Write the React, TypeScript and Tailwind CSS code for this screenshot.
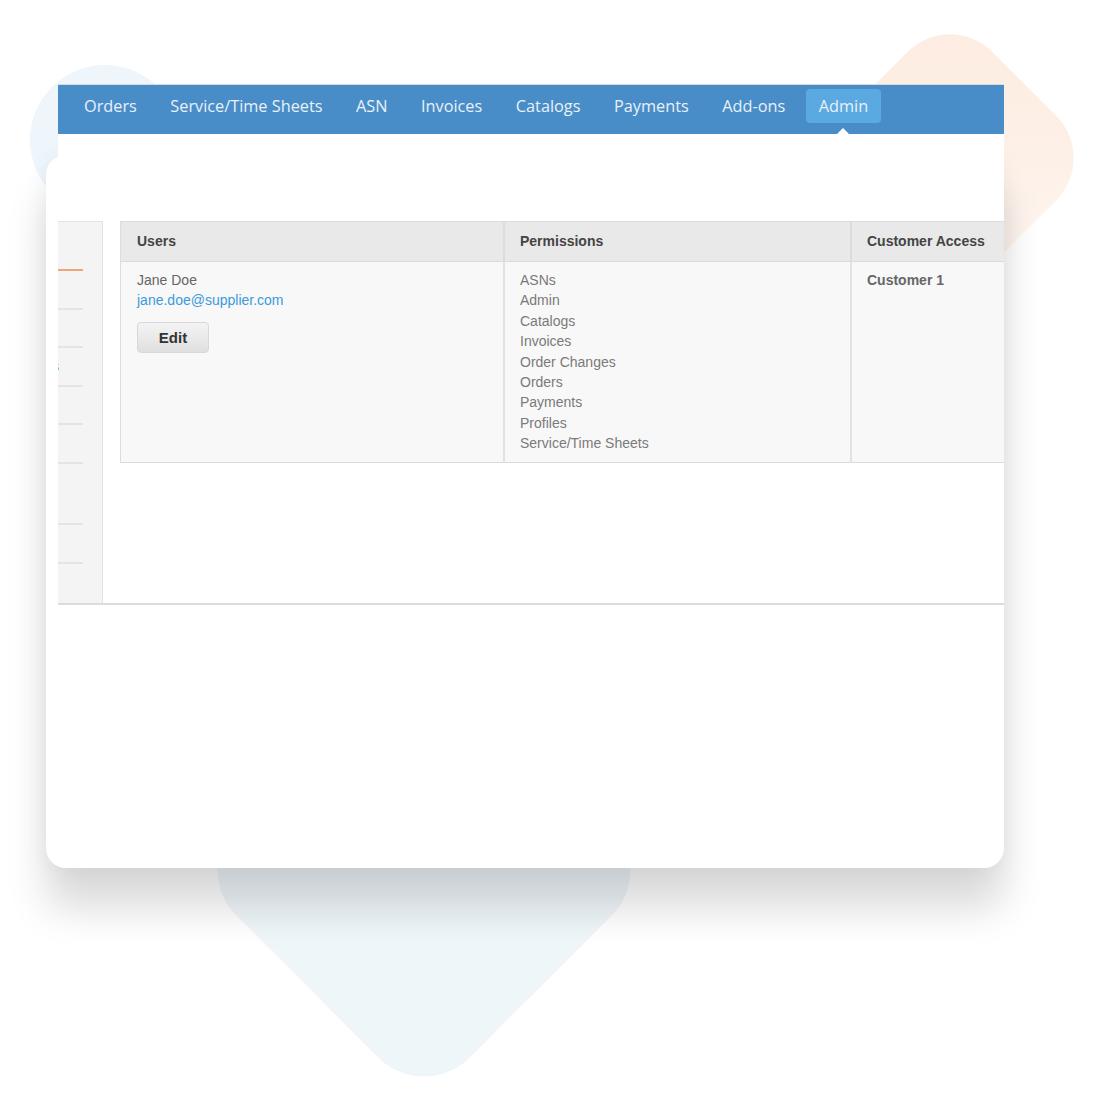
const navItems = [
  "Orders",
  "Service/Time Sheets",
  "ASN",
  "Invoices",
  "Catalogs",
  "Payments",
  "Add-ons",
  "Admin",
];

const permissions = [
  "ASNs",
  "Admin",
  "Catalogs",
  "Invoices",
  "Order Changes",
  "Orders",
  "Payments",
  "Profiles",
  "Service/Time Sheets",
];

// heights of the cut-off side menu rows, line included
const sideRows = [49, 39, 38, 39, 38, 39, 61, 39];

export default function App() {
  return (
    <div className="relative w-[1111px] h-[1114px] overflow-hidden bg-white">
      {/* background shapes */}
      <div className="absolute left-[30px] top-[65px] w-[150px] h-[150px] rounded-full bg-[#eef6fb]" />
      <div className="absolute left-[845px] top-[53px] w-[210px] h-[210px] rotate-45 rounded-[60px] bg-linear-to-br from-[#fdece0] via-[#fdf0e7] to-[#fffaf6]" />
      <div className="absolute left-[259px] top-[705px] w-[330px] h-[330px] rotate-45 rounded-[65px] bg-[#eff6fa]" />

      <div className="relative z-10 pt-[155px] pl-[46px]">
        {/* CARD */}
        <div className="flow-root w-[958px] h-[713px] rounded-[20px] bg-white shadow-[0_40px_40px_rgba(0,0,0,0.15),0_0_24px_rgba(0,0,0,0.05)]">
          {/* SCREENSHOT */}
          <div className="-mt-[71px] ml-[12px] w-[946px] overflow-hidden bg-white font-['Liberation_Sans',Arial,sans-serif]">
            {/* NAV */}
            <div className="border-t border-[#dadada]">
              <nav className="flex h-[49px] items-start gap-[7.5px] bg-[#488dc8] pl-[13px] pt-[4px] font-['Open_Sans',sans-serif] text-[16.3px] text-[#e9f1f9]">
                {navItems.map((item) => (
                  <div
                    key={item}
                    className={
                      item === "Admin"
                        ? "relative flex h-[34px] items-center rounded-[4px] bg-[#5aa9e0] px-[13px] pt-[1px]"
                        : "relative flex h-[34px] items-center px-[13px] pt-[1px]"
                    }
                  >
                    {item}
                    {item === "Admin" && (
                      <span className="absolute left-1/2 top-[39px] -ml-[6px] h-0 w-0 border-x-[6px] border-b-[6px] border-x-transparent border-b-white" />
                    )}
                  </div>
                ))}
              </nav>
            </div>

            {/* page title cut off at left */}
            <div className="h-[87px] overflow-hidden pt-[48px] text-[14px] text-[#3b9ad9]">
              <span className="-ml-[7px]">s</span>
            </div>

            {/* MAIN */}
            <div className="flex h-[382px]">
              {/* side menu */}
              <div className="w-[45px] shrink-0 border-t border-r border-[#e3e3e3] bg-[#f4f4f4]">
                {sideRows.map((h, i) => (
                  <div
                    key={i}
                    style={{ height: h }}
                    className={
                      i === 0
                        ? "w-[25px] border-b-2 border-[#eea47c]"
                        : "w-[25px] overflow-hidden border-b-2 border-[#e4e4e4] text-[14px] leading-[36px] text-[#3b9ad9]"
                    }
                  >
                    {i === 3 && <span className="-ml-[6px]">s</span>}
                  </div>
                ))}
              </div>

              {/* users table */}
              <div className="ml-[17px] w-[900px] shrink-0 self-start">
                <div className="grid grid-cols-[382px_347px_300px] border-t border-l border-b border-[#dcdcdc] text-[14px]">
                  <div className="flex h-[40px] items-center border-b border-[#dcdcdc] bg-[#e9e9e9] pl-[16px] font-bold text-[#444]">
                    Users
                  </div>
                  <div className="flex h-[40px] items-center border-b border-l-2 border-[#dcdcdc] bg-[#e9e9e9] pl-[15px] font-bold text-[#444]">
                    Permissions
                  </div>
                  <div className="flex h-[40px] items-center border-b border-l-2 border-[#dcdcdc] bg-[#e9e9e9] pl-[15px] font-bold text-[#444]">
                    Customer Access
                  </div>

                  <div className="bg-[#f8f8f8] pl-[16px] pt-[8px] leading-[20px]">
                    <div className="text-[#666]">Jane Doe</div>
                    <div className="text-[#3b9ad9]">jane.doe@supplier.com</div>
                    <button className="mt-[12px] flex h-[31px] w-[72px] items-center justify-center rounded-[4px] border border-[#d8d8d8] bg-linear-to-b from-[#f4f4f4] to-[#dfdfdf] text-[15px] font-bold text-[#333]">
                      Edit
                    </button>
                  </div>
                  <div className="border-l-2 border-[#e2e2e2] bg-[#f8f8f8] pb-[8px] pl-[15px] pt-[8px] leading-[20.4px] text-[#7a7a7a]">
                    {permissions.map((p) => (
                      <div key={p}>{p}</div>
                    ))}
                  </div>
                  <div className="border-l-2 border-[#e2e2e2] bg-[#f8f8f8] pl-[15px] pt-[8px] leading-[20px] font-bold text-[#666]">
                    Customer 1
                  </div>
                </div>
              </div>
            </div>

            {/* bottom rule */}
            <div className="h-[2px] bg-[#dcdcdc]" />
          </div>
        </div>
      </div>
    </div>
  );
}
